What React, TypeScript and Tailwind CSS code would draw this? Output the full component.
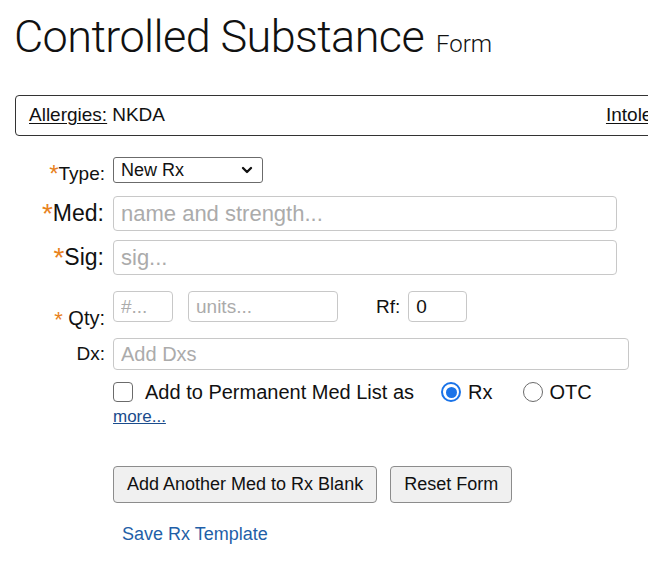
import { ChevronDown } from 'lucide-react'

const font = { fontFamily: '"Liberation Sans", Arial, sans-serif' }
const light = { fontFamily: 'Roboto, "Liberation Sans", sans-serif' }

function Star({ size = 'text-[18px]' }: { size?: string }) {
  return <span className={`text-[#e8821e] ${size} leading-none align-[-2px]`}>*</span>
}

const field =
  'border border-[#c8c8c8] rounded-[4px] px-[7px] placeholder:text-[#ababab] outline-none'

export default function App() {
  return (
    <div className="w-[648px] h-[586px] overflow-hidden bg-white text-[#111]" style={font}>
      <h1 className="pl-[14px] pt-[11px] h-[63px] flex items-baseline whitespace-nowrap" style={light}>
        <span className="text-[45px] leading-[52px] font-light tracking-[-0.6px]">Controlled Substance</span>
        <span className="ml-[12px] text-[24px] leading-none font-light">Form</span>
      </h1>

      <div className="mt-[32px] ml-[15px] w-[700px] h-[41px] border border-[#333] rounded-[4px] flex items-center pl-[13px] text-[19px] whitespace-nowrap">
        <span className="underline underline-offset-2">Allergies:</span>
        <span className="ml-[5px]">NKDA</span>
        <span className="ml-[441px] underline underline-offset-2">Intolerances:</span>
      </div>

      {/* Type */}
      <div className="flex items-center h-[26px] mt-[21px]">
        <div className="w-[105px] text-right text-[19px] pt-[9px]">
          <Star size="text-[24px]" />Type:
        </div>
        <div className="ml-[8px] w-[150px] h-[26px] border border-[#6b6b6b] rounded-[3px] flex items-center justify-between px-[7px] text-[18px]">
          <span>New Rx</span>
          <ChevronDown className="w-[16px] h-[16px]" strokeWidth={3.5} />
        </div>
      </div>

      {/* Med */}
      <div className="flex items-center h-[35px] mt-[13px]">
        <div className="w-[104px] text-right text-[23px]">
          <Star size="text-[28px]" />Med:
        </div>
        <input className={`ml-[9px] w-[504px] h-[35px] text-[22px] ${field}`} placeholder="name and strength..." />
      </div>

      {/* Sig */}
      <div className="flex items-center h-[35px] mt-[9px]">
        <div className="w-[104px] text-right text-[23px]">
          <Star size="text-[28px]" />Sig:
        </div>
        <input className={`ml-[9px] w-[504px] h-[35px] text-[22px] ${field}`} placeholder="sig..." />
      </div>

      {/* Qty */}
      <div className="flex items-start h-[31px] mt-[16px]">
        <div className="w-[105px] text-right text-[20px] leading-[22px] mt-[16px]">
          <Star size="text-[22px]" /> Qty:
        </div>
        <input className={`ml-[8px] w-[60px] h-[31px] text-[19px] ${field}`} placeholder="#..." />
        <input className={`ml-[15px] w-[150px] h-[31px] text-[19px] ${field}`} placeholder="units..." />
        <span className="ml-[38px] text-[19px] leading-[31px]">Rf:</span>
        <input className={`ml-[8px] w-[59px] h-[31px] text-[19px] ${field}`} defaultValue="0" />
      </div>

      {/* Dx */}
      <div className="flex items-center h-[32px] mt-[16px]">
        <div className="w-[105px] text-right text-[19px]">Dx:</div>
        <input className={`ml-[8px] w-[516px] h-[32px] text-[20px] ${field}`} placeholder="Add Dxs" />
      </div>

      <div className="ml-[113px]">
        <div className="flex items-center mt-[11px] text-[20px] h-[22px] whitespace-nowrap">
          <span className="w-[20px] h-[20px] border border-[#6b6b6b] rounded-[4px]" />
          <span className="ml-[12px]">Add to Permanent Med List as</span>
          <span className="ml-[27px] w-[20px] h-[20px] rounded-full border-2 border-[#1a73e8] flex items-center justify-center">
            <span className="w-[11px] h-[11px] rounded-full bg-[#1a73e8]" />
          </span>
          <span className="ml-[7px]">Rx</span>
          <span className="ml-[30px] w-[20px] h-[20px] rounded-full border border-[#6b6b6b]" />
          <span className="ml-[7px]">OTC</span>
        </div>
        <a className="block mt-[4px] text-[17px] leading-[20px] text-[#1a4c8c] underline w-fit">more...</a>

        <div className="flex mt-[39px] gap-[13px]">
          <button className="h-[37px] px-[13px] bg-[#f0f0f0] border border-[#8c8c8c] rounded-[4px] text-[18px]">
            Add Another Med to Rx Blank
          </button>
          <button className="h-[37px] px-[13px] bg-[#f0f0f0] border border-[#8c8c8c] rounded-[4px] text-[18px]">
            Reset Form
          </button>
        </div>

        <a className="block mt-[21px] ml-[9px] text-[18px] leading-[20px] text-[#1f5fa8]">Save Rx Template</a>
      </div>
    </div>
  )
}
